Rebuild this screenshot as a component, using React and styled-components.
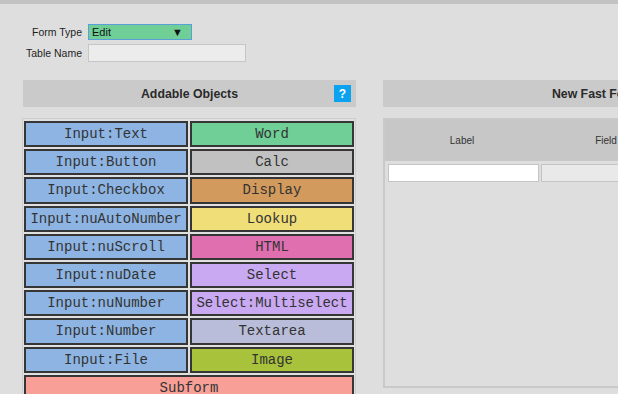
import React from "react";
import styled, { createGlobalStyle } from "styled-components";

const GlobalStyle = createGlobalStyle`
  html, body {
    margin: 0;
    padding: 0;
    background: #dedede;
    overflow: hidden;
  }
  body {
    font-family: "Liberation Sans", Arial, sans-serif;
    color: #333;
  }
`;

const leftObjects = [
  "Input:Text",
  "Input:Button",
  "Input:Checkbox",
  "Input:nuAutoNumber",
  "Input:nuScroll",
  "Input:nuDate",
  "Input:nuNumber",
  "Input:Number",
  "Input:File",
];

const rightObjects = [
  { name: "Word", color: "#6fcf97" },
  { name: "Calc", color: "#c1c1c1" },
  { name: "Display", color: "#d29a5c" },
  { name: "Lookup", color: "#f0de78" },
  { name: "HTML", color: "#e06fb0" },
  { name: "Select", color: "#c9a9f1" },
  { name: "Select:Multiselect", color: "#c9a9f1" },
  { name: "Textarea", color: "#b9bdd9" },
  { name: "Image", color: "#a8c23c" },
];

const App = () => {
  const rows = leftObjects.map((item, i) => [item, rightObjects[i]]);
  return (
    <Page>
      <GlobalStyle />
      <TopBar />
      <FormFields>
        <FieldLabel>Form Type</FieldLabel>
        <TypeSelect>
          <span>Edit</span>
          <span>▼</span>
        </TypeSelect>
        <FieldLabel>Table Name</FieldLabel>
        <TextInput />
      </FormFields>
      <Main>
        <LeftColumn>
          <SectionHeader>
            Addable Objects
            <HelpButton>?</HelpButton>
          </SectionHeader>
          <ObjectPanel>
            {rows.map(([left, right]) => (
              <React.Fragment key={left}>
                <ObjectButton color="#8db4e2">{left}</ObjectButton>
                <ObjectButton color={right.color}>{right.name}</ObjectButton>
              </React.Fragment>
            ))}
            <ObjectButton color="#f8a098" wide>
              Subform
            </ObjectButton>
          </ObjectPanel>
        </LeftColumn>
        <RightColumn>
          <SectionHeader>New Fast Form</SectionHeader>
          <FastFormPanel>
            <FastTable>
              <HeadCell>Label</HeadCell>
              <HeadCell>Field</HeadCell>
              <HeadCell>Type</HeadCell>
              <BodyCell>
                <CellInput white />
              </BodyCell>
              <BodyCell>
                <CellInput />
              </BodyCell>
              <BodyCell>
                <CellInput />
              </BodyCell>
            </FastTable>
          </FastFormPanel>
        </RightColumn>
      </Main>
    </Page>
  );
};

const Page = styled.div`
  width: 618px;
  height: 394px;
  overflow: hidden;
`;

const TopBar = styled.div`
  height: 4px;
  background: #c3c3c3;
`;

const FormFields = styled.div`
  display: grid;
  grid-template-columns: 82px 158px;
  column-gap: 6px;
  row-gap: 4px;
  align-items: center;
  padding-top: 20px;
`;

const FieldLabel = styled.label`
  text-align: right;
  font-size: 10.5px;
  color: #1e1e1e;
`;

const TypeSelect = styled.div`
  box-sizing: border-box;
  width: 104px;
  height: 16px;
  display: flex;
  align-items: center;
  justify-content: space-between;
  padding: 0 8px 0 3px;
  background: #6fcf97;
  border: 1px solid #5a9fd8;
  font-size: 11px;
  color: #111;
`;

const TextInput = styled.div`
  box-sizing: border-box;
  width: 158px;
  height: 18px;
  background: #ececec;
  border: 1px solid #c6c6c6;
`;

const Main = styled.div`
  display: flex;
  gap: 27px;
  padding-left: 23px;
  margin-top: 18px;
`;

const LeftColumn = styled.section`
  width: 333px;
  flex: none;
`;

const RightColumn = styled.section`
  width: 426px;
  flex: none;
`;

const SectionHeader = styled.div`
  position: relative;
  height: 27px;
  display: flex;
  align-items: center;
  justify-content: center;
  background: #cacaca;
  font-weight: bold;
  font-size: 12.3px;
  color: #2a2a2a;
`;

const HelpButton = styled.span`
  position: absolute;
  right: 5px;
  top: 5px;
  width: 17px;
  height: 17px;
  display: flex;
  align-items: center;
  justify-content: center;
  background: #0ba3ef;
  color: #fff;
  font-size: 12px;
  font-weight: bold;
`;

const ObjectPanel = styled.div`
  margin-top: 11px;
  margin-left: -1px;
  display: grid;
  grid-template-columns: 1fr 1fr;
  grid-auto-rows: 26.2px;
  gap: 2px;
  padding: 2px 1px 1px;
  border: 1px solid #cdcdcd;
  background: #e0e0e0;
`;

const ObjectButton = styled.div`
  box-sizing: border-box;
  grid-column: ${(p) => (p.wide ? "1 / -1" : "auto")};
  display: flex;
  align-items: center;
  justify-content: center;
  background: ${(p) => p.color};
  border: 2px solid #363636;
  font-family: "Liberation Mono", "DejaVu Sans Mono", monospace;
  font-size: 14px;
  color: #333;
  white-space: nowrap;
`;

const FastFormPanel = styled.div`
  box-sizing: border-box;
  margin-top: 11px;
  height: 270px;
  border: 2px solid #c9c9c9;
  background: #dedede;
`;

const FastTable = styled.div`
  display: grid;
  grid-template-columns: 154px 134px 1fr;
`;

const HeadCell = styled.div`
  height: 41px;
  display: flex;
  align-items: center;
  justify-content: center;
  background: #c7c7c7;
  font-size: 10px;
  color: #333;
`;

const BodyCell = styled.div`
  padding: 3px 0 0 3px;
`;

const CellInput = styled.div`
  box-sizing: border-box;
  height: 18px;
  width: 151px;
  margin-left: ${(p) => (p.white ? "0" : "-1px")};
  background: ${(p) => (p.white ? "#fff" : "#e9e9e9")};
  border: 1px solid #c4c4c4;
`;

export default App;
